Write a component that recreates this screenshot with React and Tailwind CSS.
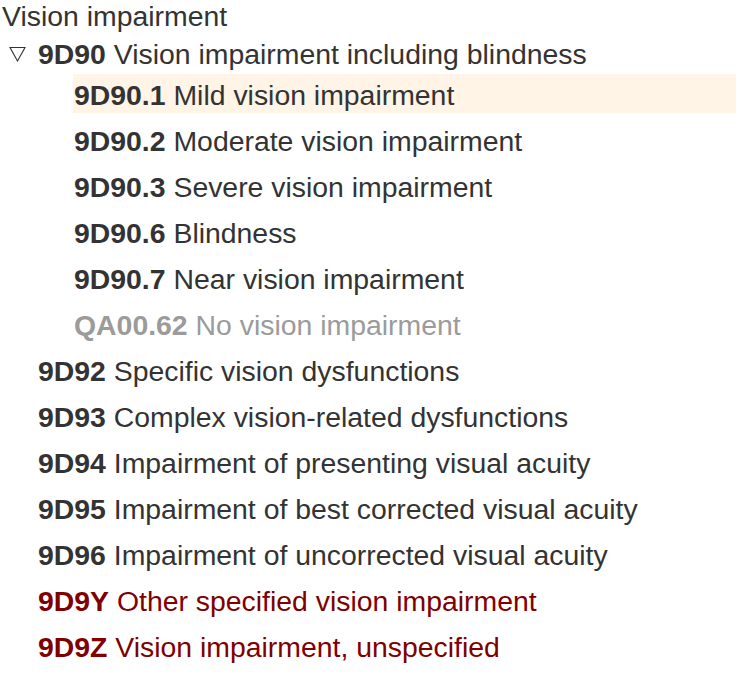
const children = [
  { code: "9D90.1", title: "Mild vision impairment", active: true },
  { code: "9D90.2", title: "Moderate vision impairment" },
  { code: "9D90.3", title: "Severe vision impairment" },
  { code: "9D90.6", title: "Blindness" },
  { code: "9D90.7", title: "Near vision impairment" },
  { code: "QA00.62", title: "No vision impairment", muted: true },
];

const siblings = [
  { code: "9D92", title: "Specific vision dysfunctions" },
  { code: "9D93", title: "Complex vision-related dysfunctions" },
  { code: "9D94", title: "Impairment of presenting visual acuity" },
  { code: "9D95", title: "Impairment of best corrected visual acuity" },
  { code: "9D96", title: "Impairment of uncorrected visual acuity" },
  { code: "9D9Y", title: "Other specified vision impairment", residual: true },
  { code: "9D9Z", title: "Vision impairment, unspecified", residual: true },
];

const Entity = ({ item }) => {
  const color = item.muted
    ? "text-[#9b9b9b]"
    : item.residual
    ? "text-[#800000]"
    : "text-[#333333]";
  return (
    <span className={color}>
      <span className="font-bold">{item.code}</span> {item.title}
    </span>
  );
};

const App = () => {
  return (
    <div
      className="w-[736px] h-[674px] bg-white text-[28.4px] leading-[32px] text-[#333333] overflow-hidden"
      style={{ fontFamily: '"Liberation Sans", Arial, sans-serif' }}
    >
      <div className="pl-[2px] h-[31px] flex items-center">Vision impairment</div>
      <ul>
        <li>
          <div className="flex items-center h-[43px] pt-[3px]">
            <div className="w-[38px] flex pl-[9px]">
              <svg width="17" height="16" viewBox="0 0 17 16">
                <polygon
                  points="1,1.5 16,1.5 8.5,15"
                  fill="none"
                  stroke="#333333"
                  strokeWidth="1.1"
                />
              </svg>
            </div>
            <Entity item={{ code: "9D90", title: "Vision impairment including blindness" }} />
          </div>
          <ul className="pl-[73px]">
            {children.map((c) => (
              <li key={c.code} className="mb-[7px]">
                <div
                  className={
                    "h-[39px] flex items-center pl-[1px] pt-[3px] " +
                    (c.active ? "bg-[#fff4e5]" : "")
                  }
                >
                  <Entity item={c} />
                </div>
              </li>
            ))}
          </ul>
        </li>
        {siblings.map((s) => (
          <li key={s.code} className="pl-[38px] mb-[7px]">
            <div className="h-[39px] flex items-center pt-[3px]">
              <Entity item={s} />
            </div>
          </li>
        ))}
      </ul>
    </div>
  );
};

export default App;
